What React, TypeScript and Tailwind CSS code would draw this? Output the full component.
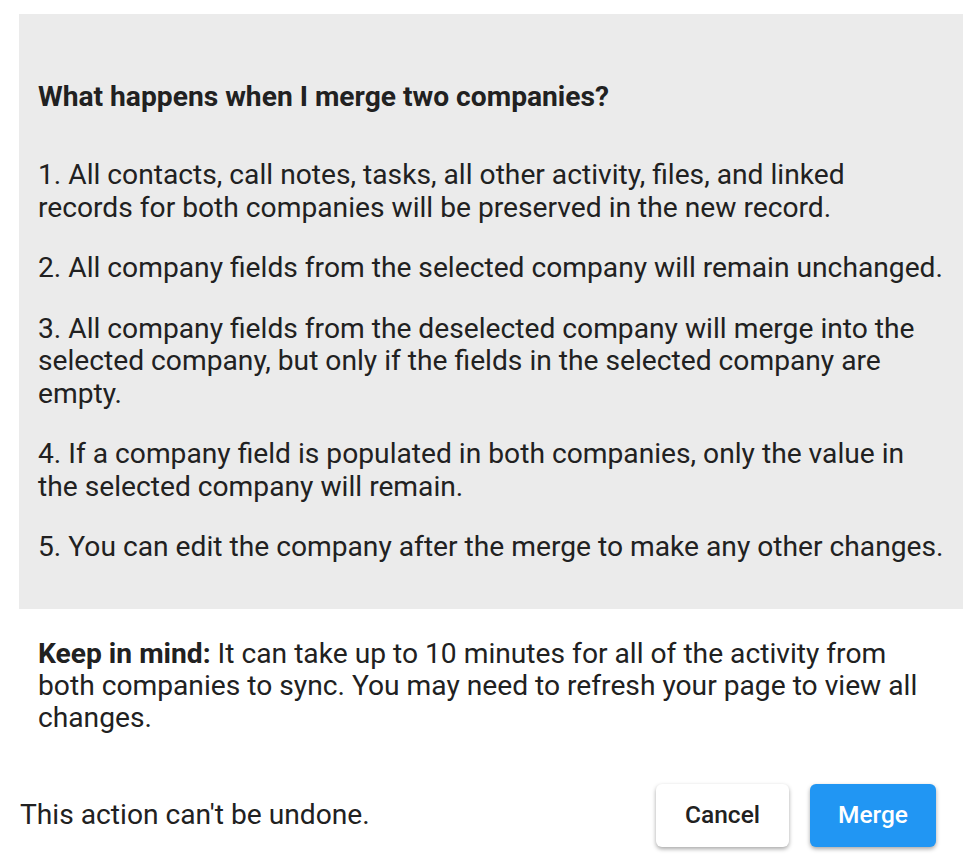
export default function App() {
  return (
    <main
      className="min-h-screen bg-white text-[#212121]"
      style={{ fontFamily: "Roboto, 'Liberation Sans', sans-serif" }}
    >
      <div className="pt-[14px]">
        <section className="ml-[19px] w-[944px] bg-[#ebebeb] px-[19px] pt-[67px] pb-[45px] text-[28.2px] leading-[32.5px]">
          <h2 className="mb-[46px] text-[28.2px] font-bold leading-[32px]">What happens when I merge two companies?</h2>
          <div className="flex flex-col gap-[28px]">
            <p>1. All contacts, call notes, tasks, all other activity, files, and linked records for both companies will be preserved in the new record.</p>
            <p>2. All company fields from the selected company will remain unchanged.</p>
            <p>3. All company fields from the deselected company will merge into the selected company, but only if the fields in the selected company are empty.</p>
            <p>4. If a company field is populated in both companies, only the value in the selected company will remain.</p>
            <p>5. You can edit the company after the merge to make any other changes.</p>
          </div>
        </section>
        <p className="mt-[29px] ml-[38px] w-[900px] text-[28.2px] leading-[32px]">
          <span className="font-bold">Keep in mind:</span> It can take up to 10 minutes for all of the activity from both companies to sync. You may need to refresh your page to view all changes.
        </p>
        <div className="mt-[50px] flex items-center justify-between pl-[20px] pr-[36px]">
          <span className="text-[28.2px]">This action can't be undone.</span>
          <div className="flex gap-[21px]">
            <button className="h-[63px] w-[133px] rounded-[6px] bg-white text-[24.5px] font-medium shadow-[0_2px_4px_rgba(0,0,0,0.35)]">Cancel</button>
            <button className="h-[63px] w-[126px] rounded-[6px] bg-[#2196f3] text-[24.5px] font-medium text-white shadow-[0_2px_4px_rgba(0,0,0,0.35)]">Merge</button>
          </div>
        </div>
      </div>
    </main>
  );
}
